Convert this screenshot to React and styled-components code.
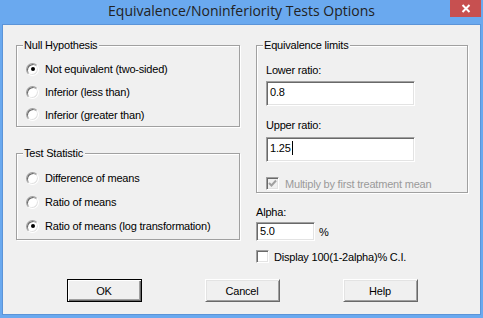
import styled, { createGlobalStyle } from "styled-components";

const GlobalStyle = createGlobalStyle`
  html, body {
    margin: 0;
    padding: 0;
  }
  body {
    font-family: "Liberation Sans", Arial, sans-serif;
    font-size: 11px;
    letter-spacing: -0.2px;
    color: #000;
  }
`;

const Window = styled.div`
  width: 483px;
  height: 318px;
  box-sizing: border-box;
  background: #6aa9ef;
  padding: 0 2px 3px 2px;
  display: flex;
  flex-direction: column;
`;

const TitleBar = styled.div`
  height: 24px;
  display: grid;
  grid-template-columns: 1fr auto 1fr;
`;

const Title = styled.div`
  grid-column: 2;
  font-family: "Open Sans", "Noto Sans", sans-serif;
  font-size: 14px;
  letter-spacing: 0;
  line-height: 22px;
  color: #222;
  white-space: nowrap;
`;

const CloseButton = styled.div`
  grid-column: 3;
  justify-self: end;
  width: 31px;
  height: 17px;
  background: #c75050;
  display: flex;
  align-items: center;
  justify-content: center;
`;

const Client = styled.div`
  flex: 1;
  background: #f0f0f0;
  border: 1px solid #5b94d8;
  padding: 20px 12px 12px 13px;
  display: flex;
  flex-direction: column;
`;

const TopRow = styled.div`
  display: flex;
  gap: 16px;
`;

const LeftColumn = styled.div`
  width: 224px;
  display: flex;
  flex-direction: column;
  gap: 26px;
`;

const RightColumn = styled.div`
  flex: 1;
  display: flex;
  flex-direction: column;
`;

const Group = styled.div`
  position: relative;
  box-sizing: border-box;
  height: ${p => p.$h}px;
  border: 1px solid #a0a0a0;
  box-shadow: inset 1px 1px 0 #fff, 1px 1px 0 #fff;
  padding: ${p => p.$pad};
  display: flex;
  flex-direction: column;
`;

const Legend = styled.span`
  position: absolute;
  top: -7px;
  left: 6px;
  padding: 0 2px 0 1px;
  line-height: 13px;
  background: #f0f0f0;
`;

const RadioRow = styled.label`
  height: 24px;
  display: flex;
  align-items: center;
  gap: 6px;
`;

const RadioCircle = styled.span`
  flex: none;
  width: 13px;
  height: 13px;
  box-sizing: border-box;
  border-radius: 50%;
  border: 1px solid;
  border-color: #a0a0a0 #fff #fff #a0a0a0;
  background: #fff;
  box-shadow: inset 1px 1px 0 #696969, inset -1px -1px 0 #e3e3e3;
  display: flex;
  align-items: center;
  justify-content: center;

  &::after {
    content: "";
    width: 4px;
    height: 4px;
    border-radius: 50%;
    background: ${p => (p.$checked ? "#000" : "transparent")};
  }
`;

const FieldLabel = styled.div`
  line-height: 13px;
  margin-top: ${p => p.$mt || 0}px;
  margin-bottom: ${p => p.$mb || 0}px;
`;

const TextBox = styled.div`
  box-sizing: border-box;
  width: ${p => p.$w}px;
  height: ${p => p.$h}px;
  background: #fff;
  border: 1px solid;
  border-color: #a0a0a0 #fff #fff #a0a0a0;
  box-shadow: inset 1px 1px 0 #696969, inset -1px -1px 0 #e3e3e3;
  padding: ${p => p.$pt}px 2px 0 3px;
  line-height: 13px;
  display: flex;
  align-items: flex-start;
`;

const Caret = styled.span`
  width: 1px;
  height: 14px;
  background: #000;
  margin-left: 1px;
  margin-top: -1px;
`;

const CheckRow = styled.label`
  display: flex;
  align-items: center;
  gap: ${p => p.$gap}px;
  margin-top: ${p => p.$mt}px;
  height: 13px;
  color: ${p => (p.$disabled ? "#9a9a9a" : "#000")};
`;

const CheckBox = styled.span`
  flex: none;
  width: 13px;
  height: 13px;
  box-sizing: border-box;
  border: 1px solid;
  border-color: #a0a0a0 #fff #fff #a0a0a0;
  box-shadow: inset 1px 1px 0 #696969, inset -1px -1px 0 #e3e3e3;
  background: ${p => (p.$disabled ? "#f0f0f0" : "#fff")};
  display: flex;
  align-items: center;
  justify-content: center;
`;

const AlphaRow = styled.div`
  display: flex;
  align-items: center;
  gap: 4px;
  margin-top: 3px;
`;

const ButtonRow = styled.div`
  margin-top: auto;
  display: flex;
  justify-content: center;
  gap: 63px;
`;

const Button = styled.button`
  box-sizing: border-box;
  width: 75px;
  height: 23px;
  font: inherit;
  letter-spacing: inherit;
  color: #000;
  background: #f0f0f0;
  padding: 0;
  border: 1px solid;
  border-color: ${p => (p.$default ? "#000" : "#fff #696969 #696969 #fff")};
  box-shadow: ${p =>
    p.$default
      ? "inset 1px 1px 0 #fff, inset -1px -1px 0 #696969, inset -2px -2px 0 #a0a0a0"
      : "inset 1px 1px 0 #e3e3e3, inset -1px -1px 0 #a0a0a0"};
`;

function Radio({ checked, children }) {
  return (
    <RadioRow>
      <RadioCircle $checked={checked} />
      <span>{children}</span>
    </RadioRow>
  );
}

export default function App() {
  return (
    <>
      <GlobalStyle />
      <Window>
        <TitleBar>
          <Title>Equivalence/Noninferiority Tests Options</Title>
          <CloseButton>
            <svg width="10" height="9" viewBox="0 0 10 9">
              <path d="M1.5 1 L8.5 8 M8.5 1 L1.5 8" stroke="#fff" strokeWidth="2" />
            </svg>
          </CloseButton>
        </TitleBar>
        <Client>
          <TopRow>
            <LeftColumn>
              <Group $h={82} $pad="12px 0 0 9px">
                <Legend>Null Hypothesis</Legend>
                <Radio checked>Not equivalent (two-sided)</Radio>
                <Radio>Inferior (less than)</Radio>
                <Radio>Inferior (greater than)</Radio>
              </Group>
              <Group $h={87} $pad="12px 0 0 9px">
                <Legend>Test Statistic</Legend>
                <Radio>Difference of means</Radio>
                <Radio>Ratio of means</Radio>
                <Radio checked>Ratio of means (log transformation)</Radio>
              </Group>
            </LeftColumn>
            <RightColumn>
              <Group $h={148} $pad="18px 0 0 9px">
                <Legend>Equivalence limits</Legend>
                <FieldLabel $mb={4}>Lower ratio:</FieldLabel>
                <TextBox $w={149} $h={25} $pt={4}>0.8</TextBox>
                <FieldLabel $mt={13} $mb={5}>Upper ratio:</FieldLabel>
                <TextBox $w={149} $h={25} $pt={4}>
                  1.25
                  <Caret />
                </TextBox>
                <CheckRow $disabled $gap={6} $mt={15}>
                  <CheckBox $disabled>
                    <svg width="9" height="9" viewBox="0 0 9 9">
                      <path d="M1 4 L3.5 6.5 L8 1.5" fill="none" stroke="#a0a0a0" strokeWidth="2" />
                    </svg>
                  </CheckBox>
                  <span>Multiply by first treatment mean</span>
                </CheckRow>
              </Group>
              <FieldLabel $mt={13}>Alpha:</FieldLabel>
              <AlphaRow>
                <TextBox $w={59} $h={19} $pt={2}>5.0</TextBox>
                <span>%</span>
              </AlphaRow>
              <CheckRow $gap={5} $mt={9}>
                <CheckBox />
                <span>Display 100(1-2alpha)% C.I.</span>
              </CheckRow>
            </RightColumn>
          </TopRow>
          <ButtonRow>
            <Button $default>OK</Button>
            <Button>Cancel</Button>
            <Button>Help</Button>
          </ButtonRow>
        </Client>
      </Window>
    </>
  );
}
